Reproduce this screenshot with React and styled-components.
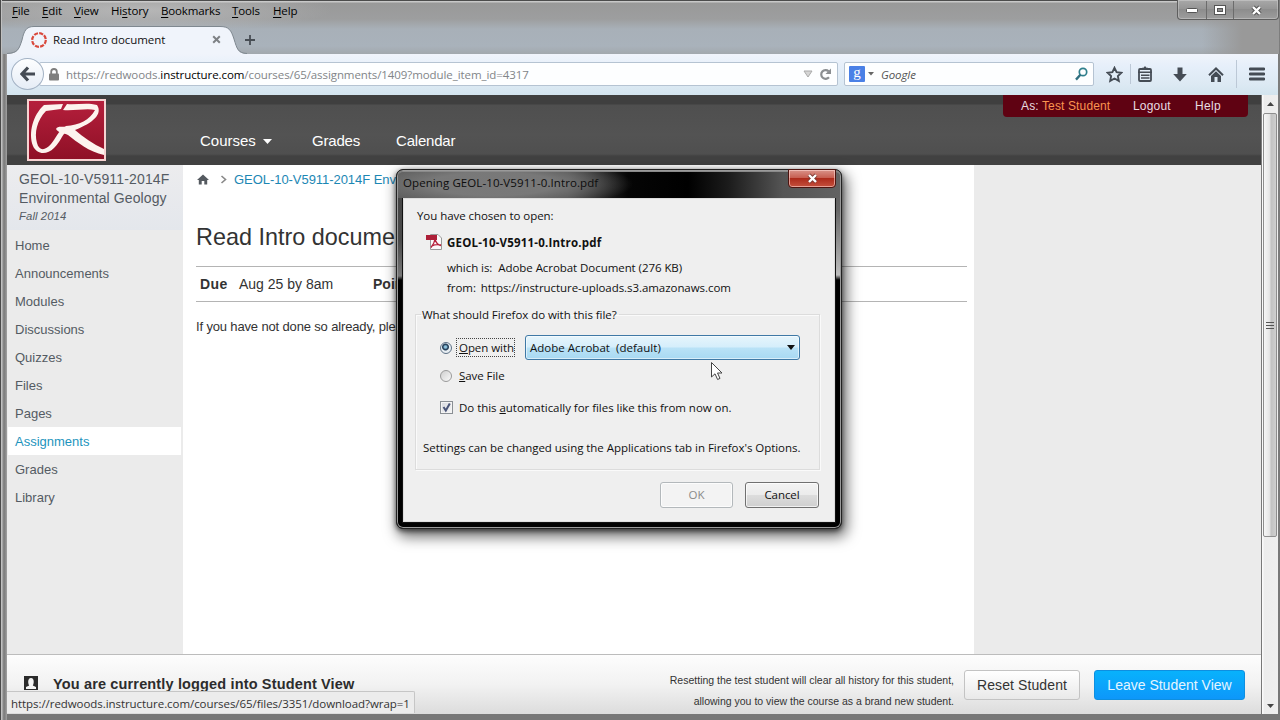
import React, { useState } from 'react'
import styled, { createGlobalStyle } from 'styled-components'

const ui = "'Open Sans', 'Noto Sans', sans-serif"
const arial = "'Liberation Sans', Arial, sans-serif"

const GlobalStyle = createGlobalStyle`
  * {
    box-sizing: border-box;
  }
  body {
    margin: 0;
    overflow: hidden;
    font-family: ${arial};
  }
`;

const Text = styled.span`
  font-size: ${p => p.$size}px;
  letter-spacing: ${p => p.$track || 0}px;
  white-space: pre;
`;

const UiText = styled.span`
  font-size: 11.5px;
  letter-spacing: ${p => p.$track || -0.06}px;
  white-space: pre;
`;

const Window = styled.div`
  position: relative;
  width: 1280px;
  height: 720px;
  display: flex;
  flex-flow: column;
  padding: 0 2px 6px 7px;
  background:
    linear-gradient(90deg, #4a4a4a 0 1px, #c0c0c0 1px 2px, #8a8a8a 3px, #7c7c7c 5px, #9b9b9b 6px 7px, transparent 7px),
    linear-gradient(#7d7d7d, #777);
`;

/* title area */

const TitleArea = styled.div`
  position: relative;
  height: 54px;
  margin: 0 -1px 0 -5px;
  padding-left: 5px;
  display: flex;
  flex-flow: column;
  border-top: 1px solid #4c4c4c;
  background:
    linear-gradient(90deg, rgba(150,150,150,0) 1200px, #999 1240px),
    radial-gradient(ellipse 190px 22px at 140px 9px, rgba(205,205,205,0.55), rgba(205,205,205,0)),
    linear-gradient(#c8c8c8 0 1px, #999 2px, #9d9e9f 18px, #a8b0b8 28px, #a9b2bb 45px, #a2a8ad 53px);
`;

const MenuBar = styled.div`
  display: flex;
  height: 20px;
  padding: 0 0 2px 5px;
  align-items: center;
  font-family: ${ui};
  color: #000;
`;

const MenuItem = styled.div`
  width: ${p => p.$w}px;
  line-height: 18px;
  u {
    text-underline-offset: 2px;
  }
`;

const Controls = styled.div`
  position: absolute;
  top: -1px;
  right: 0;
  display: flex;
  width: 102px;
  height: 20px;
  padding-top: 1px;
  border: 1px solid #5e5e5e;
  border-top: 0;
  border-radius: 0 0 4px 4px;
  background: linear-gradient(#a8a8a8, #949494 50%, #8d8d8d 50%, #9d9d9d);
  box-shadow: inset 0 0 0 1px rgba(255,255,255,0.25);
`;

const Control = styled.div`
  display: flex;
  align-items: center;
  justify-content: center;
  width: ${p => p.$w}px;
  & + & {
    border-left: 1px solid #6c6c6c;
  }
`;

const TabStrip = styled.div`
  display: flex;
  height: 33px;
  padding-top: 5px;
`;

const Tab = styled.div`
  position: relative;
  display: flex;
  align-items: center;
  width: 233px;
  height: 28px;
  padding: 0 0 1px 24px;
  font-family: ${ui};
  color: #111;
  & > * {
    position: relative;
  }
`;

const TabShape = styled.svg`
  && {
    position: absolute;
  }
  left: 0;
  top: 0;
`;

const TabLabel = styled.div`
  width: 165px;
  padding-left: 6px;
  margin-top: -2px;
  line-height: 18px;
`;

const NewTab = styled.svg`
  flex-shrink: 0;
  margin: 8px 0 0 4px;
`;

/* toolbar */

const Toolbar = styled.div`
  display: flex;
  align-items: center;
  height: 41px;
  flex-shrink: 0;
  padding-left: 4px;
  padding-bottom: 1px;
  background: linear-gradient(#f0f4fb, #e6effa 30%, #dce9f3 75%, #d3e4ee);
  font-family: ${ui};
`;

const Back = styled.div`
  z-index: 1;
  display: flex;
  align-items: center;
  justify-content: center;
  width: 33px;
  height: 32px;
  border: 1px solid #a3b2c4;
  border-radius: 50%;
  background: linear-gradient(#fdfeff, #e6edf6);
`;

const Field = styled.div`
  display: flex;
  align-items: center;
  width: ${p => p.$w}px;
  height: 24px;
  margin-left: ${p => p.$gap}px;
  padding-left: ${p => p.$pad}px;
  border: 1px solid #b5c3d2;
  border-radius: 2px;
  background: #fdfeff;
`;

const Address = styled.div`
  width: 744px;
  padding-left: 7px;
  line-height: 20px;
  color: #828588;
  b {
    font-weight: 400;
    color: #000;
  }
`;

const Grow = styled.div`
  flex: 1;
`;

const Engine = styled.div`
  width: 16px;
  height: 16px;
  border-radius: 1px;
  background: #4a80e6;
  color: #fff;
  font: 15px/13px 'Liberation Serif', serif;
  text-align: center;
`;

const Placeholder = styled.div`
  width: 190px;
  padding-left: 7px;
  line-height: 18px;
  margin-top: -1px;
  font-style: italic;
  color: #555;
`;

const Tools = styled.div`
  display: flex;
  align-items: center;
  padding-left: 12px;
`;

const Rule = styled.div`
  width: 1px;
  height: ${p => p.$h}px;
  margin: 0 ${p => p.$r}px 0 ${p => p.$l}px;
  background: #bcc8d6;
`;

/* page */

const Viewport = styled.div`
  position: relative;
  display: flex;
  height: 619px;
`;

const Page = styled.div`
  display: flex;
  flex-flow: column;
  width: 1254px;
`;

const Header = styled.div`
  display: flex;
  height: 70px;
  background: linear-gradient(#3f3f3f 0 9px, #4f4f4f 10px, #535353 40px, #4f4f4f 59px, #414141 61px);
`;

const Logo = styled.svg`
  margin: 4px 0 0 20px;
`;

const Nav = styled.div`
  display: flex;
  height: 18px;
  margin: 37px 0 0 94px;
  color: #fff;
  line-height: 18px;
`;

const NavItem = styled.div`
  width: ${p => p.$w}px;
  display: flex;
  align-items: center;
  gap: 7px;
`;

const Identity = styled.div`
  display: flex;
  width: 245px;
  height: 22px;
  margin: 0 13px 0 auto;
  padding-left: 18px;
  border-radius: 0 0 4px 4px;
  background: #5f0212;
  color: #e8dde0;
  line-height: 20px;
  em {
    font-style: normal;
    color: #fb9450;
  }
`;

const IdentityItem = styled.div`
  width: ${p => p.$w}px;
`;

const Body = styled.div`
  display: flex;
  height: 489px;
  background: #ebebeb;
`;

const Side = styled.div`
  width: 176px;
`;

const Course = styled.div`
  height: 65px;
  padding: 4px 0 0 12px;
  background: linear-gradient(#ececee, #e4e7ec);
  color: #555b63;
  line-height: 19px;
`;

const CourseLine = styled.div`
  height: ${p => p.$h}px;
`;

const SideItem = styled.div`
  height: 28px;
  line-height: 28px;
  margin: 0 2px 0 1px;
  padding-left: 7px;
  background: ${p => p.$active ? '#fff' : 'transparent'};
  color: ${p => p.$active ? '#1c94bd' : '#545b63'};
`;

const SideList = styled.div`
  padding-top: 1px;
`;

const Content = styled.div`
  width: 791px;
  background: #fff;
  color: #333;
`;

const Crumbs = styled.div`
  display: flex;
  align-items: center;
  height: 28px;
  padding-left: 14px;
  color: #1c87b4;
`;

const Title = styled.h1`
  height: 73px;
  margin: 0;
  padding: 27px 0 0 13px;
  line-height: 28px;
  font-weight: 400;
`;

const Details = styled.div`
  display: flex;
  align-items: center;
  width: 771px;
  height: 36px;
  margin-left: 13px;
  padding-left: 4px;
  border-top: 1px solid #b4b4b4;
  border-bottom: 1px solid #b4b4b4;
`;

const Detail = styled.div`
  width: ${p => p.$w}px;
  font-weight: ${p => p.$bold ? 700 : 400};
`;

const Paragraph = styled.div`
  padding: 15px 0 0 13px;
  line-height: 18px;
`;

const StudentBar = styled.div`
  display: flex;
  height: 60px;
  padding: 15px 16px 0 17px;
  border-top: 1px solid #bcbcbc;
  background: linear-gradient(#fdfdfd, #f2f2f2 50%, #dcdcdc);
  color: #333;
`;

const Logged = styled.div`
  padding: 4px 0 0 15px;
  line-height: 20px;
  font-weight: 700;
  color: #2c2c2c;
`;

const Note = styled.div`
  width: 290px;
  margin: -1px 10px 0 auto;
  text-align: right;
  line-height: 20px;
`;

const Button = styled.div`
  width: ${p => p.$w}px;
  height: 30px;
  margin-right: ${p => p.$gap || 0}px;
  border: 1px solid ${p => p.$primary ? '#0e8fe0' : '#c3c3c3'};
  border-radius: 3px;
  background: ${p => p.$primary ? 'linear-gradient(#08b2fc, #0d97fa)' : 'linear-gradient(#fff, #e9e9e9)'};
  color: ${p => p.$primary ? '#e4f5ff' : '#333'};
  line-height: 28px;
  text-align: center;
`;

const Status = styled.div`
  position: absolute;
  left: 0;
  bottom: 1px;
  width: 408px;
  height: 22px;
  padding-left: 4px;
  border: 1px solid #c6c6c6;
  border-left: 0;
  border-bottom: 0;
  border-radius: 0 2px 0 0;
  background: #ececec;
  color: #333;
  font-family: ${ui};
  line-height: 21px;
`;

const Scrollbar = styled.div`
  display: flex;
  flex-flow: column;
  align-items: center;
  width: 16px;
  margin-left: 1px;
  background: linear-gradient(90deg, #fafafa 0 1px, #ececec 2px, #efefef);
`;

const ScrollArrow = styled.div`
  height: 17px;
  padding-top: 7px;
`;

const Thumb = styled.div`
  display: flex;
  align-items: center;
  justify-content: center;
  width: 14px;
  height: 424px;
  margin: 1px 0 auto;
  border: 1px solid #8e8e8e;
  border-radius: 2px;
  background: linear-gradient(90deg, #f6f6f6, #e6e6e6 45%, #c2c2c2 60%, #cfcfcf);
`;

/* dialog */

const Dialog = styled.div`
  position: absolute;
  left: 396px;
  top: 169px;
  width: 446px;
  height: 360px;
  padding: 0 6px 7px 6px;
  border: 1px solid #222;
  border-radius: 7px;
  background:
    linear-gradient(#5c5c5c, #666 40px, #bdbdbd 105px, #000 110px) right / 12px 100% no-repeat,
    linear-gradient(#444, #4a4a4a 70px, #777 106px, #000 110px) left / 12px 100% no-repeat,
    #000;
  box-shadow: inset 0 0 0 1px #9a9a9a, 0 2px 5px rgba(0,0,0,0.6), 3px 6px 14px 2px rgba(0,0,0,0.55);
  font-family: ${ui};
  color: #111;
`;

const DialogTitle = styled.div`
  position: relative;
  height: 27px;
  margin: 1px -5px 0;
  padding: 0 0 0 5px;
  border-radius: 5px 5px 0 0;
  border-top: 1px solid #8a8a8a;
  line-height: 19px;
  color: #0d0d0d;
  background:
    radial-gradient(ellipse 140px 26px at 95px 12px, rgba(125,125,125,0.9) 45%, rgba(125,125,125,0)),
    linear-gradient(90deg, #555 0, #4a4a4a 170px, #050505 230px, #000 290px, #1b1b1b 330px, #555 385px, #626262);
`;

const Close = styled.div`
  position: absolute;
  top: -3px;
  right: 4px;
  display: flex;
  align-items: center;
  justify-content: center;
  width: 48px;
  height: 19px;
  border: 1px solid #4d1410;
  border-radius: 0 0 4px 4px;
  background: linear-gradient(#d9938a, #c75f52 45%, #ad2b1c 50%, #c5503d);
  box-shadow: inset 0 0 0 1px rgba(255,215,210,0.6);
`;

const Client = styled.div`
  height: 324px;
  padding: 7px 14px 0 11px;
  border: 1px solid #ddd;
  outline: 1px solid #111;
  background: #efefef;
`;

const Row = styled.div`
  display: flex;
  align-items: center;
  height: ${p => p.$h}px;
  padding-left: ${p => p.$left || 0}px;
  gap: ${p => p.$gap || 0}px;
  font-weight: ${p => p.$bold ? 700 : 400};
`;

const Group = styled.fieldset`
  height: 166px;
  margin: 4px 0 0 0;
  padding: 10px 0 0 24px;
  border: 1px solid #dcdcdc;
  box-shadow: inset 1px 1px 0 #fafafa, 1px 1px 0 #fafafa;
`;

const Legend = styled.legend`
  margin-left: -19px;
  padding: 0 2px 0 1px;
  line-height: 18px;
`;

const Focus = styled.span`
  height: 19px;
  padding: 0 0 0 2px;
  border: 1px dotted #444;
  line-height: 15px;
`;

const Hint = styled.div`
  margin-left: -17px;
  line-height: 44px;
`;

const Select = styled.div`
  display: flex;
  align-items: center;
  justify-content: space-between;
  width: 275px;
  height: 25px;
  margin-left: 10px;
  padding: 0 4px;
  border: 1px solid #3f79a6;
  border-radius: 3px;
  background: linear-gradient(#e6f5fc, #d5eefb 48%, #b9e2f7 52%, #a8d9f2);
  box-shadow: inset 0 0 0 1px rgba(255,255,255,0.55);
`;

const Radio = styled.div`
  width: 12px;
  height: 12px;
  margin-right: ${p => p.$gap}px;
  border: 1px solid ${p => p.$on ? '#5d7186' : '#9a9a9a'};
  border-radius: 50%;
  background: ${p => p.$on
    ? 'radial-gradient(circle at 45% 40%, #8fc4e0 0 1px, #27425c 2.5px 3px, #e8eef3 4px)'
    : 'linear-gradient(135deg, #cfcfcf, #fafafa)'};
`;

const Check = styled.div`
  display: flex;
  width: 13px;
  height: 13px;
  margin-right: 6px;
  border: 1px solid #8a8f94;
  background: linear-gradient(135deg, #d6d9de, #f7f7f7);
  box-shadow: inset 0 0 0 1px #f4f4f4;
`;

const Buttons = styled.div`
  display: flex;
  justify-content: flex-end;
  gap: 12px;
  padding: 12px 1px 0 0;
`;

const DialogButton = styled.div`
  width: ${p => p.$w}px;
  height: 26px;
  border: 1px solid ${p => p.$off ? '#b3b8bb' : '#707070'};
  border-radius: 3px;
  background: ${p => p.$off ? '#f3f3f3' : 'linear-gradient(#f3f3f3, #ebebeb 48%, #dcdcdc 52%, #cfcfcf)'};
  box-shadow: inset 0 0 0 1px rgba(255,255,255,0.7);
  color: ${p => p.$off ? '#8a8a8a' : '#111'};
  line-height: 21px;
  text-align: center;
`;

const Cursor = styled.svg`
  position: absolute;
  left: 710px;
  top: 361px;
`;

const menus = [
  ['F', 'ile', 30, ''],
  ['E', 'dit', 32, ''],
  ['V', 'iew', 37, ''],
  ['s', 'tory', 50, 'Hi'],
  ['B', 'ookmarks', 71, ''],
  ['T', 'ools', 41, ''],
  ['H', 'elp', 40, ''],
]

const links = ['Home', 'Announcements', 'Modules', 'Discussions', 'Quizzes', 'Files', 'Pages', 'Assignments', 'Grades', 'Library']

const Triangle = ({ w, h, up, color }) => (
  <svg width={w} height={h} display="block">
    <path d={up ? `M0 ${h}H${w}L${w / 2} 0Z` : `M0 0H${w}L${w / 2} ${h}Z`} fill={color} />
  </svg>
)

const Reload = styled.svg`
  margin-left: 6px;
`;

const EngineArrow = styled.svg`
  margin-left: 3px;
`;

const SearchIcon = styled.svg`
  margin-right: 5px;
`;

const ToolIcon = styled.svg`
  margin-left: 21px;
`;

const CrumbArrow = styled.svg`
  margin: 0 7px 0 11px;
`;

const StudentIcon = styled.svg`
  margin-top: 6px;
`;

const TitleBar = () => (
  <TitleArea>
    <MenuBar>
      {menus.map(([key, rest, w, pre]) => (
        <MenuItem key={rest} $w={w}><UiText $track={-0.15}>{pre}<u>{key}</u>{rest}</UiText></MenuItem>
      ))}
    </MenuBar>
    <Controls>
      <Control $w={28}>
        <svg width="12" height="5"><rect x="0.5" y="0.5" width="11" height="4" rx="1" fill="#fff" stroke="#555" /></svg>
      </Control>
      <Control $w={28}>
        <svg width="12" height="10"><rect x="2" y="2" width="8" height="6" fill="none" stroke="#555" strokeWidth="4" /><rect x="2" y="2" width="8" height="6" fill="none" stroke="#fff" strokeWidth="2" /></svg>
      </Control>
      <Control $w={45}>
        <svg width="13" height="11"><path d="M3 2L10 9M10 2L3 9" stroke="#555" strokeWidth="4.4" /><path d="M3 2L10 9M10 2L3 9" stroke="#fff" strokeWidth="2.4" /></svg>
      </Control>
    </Controls>
    <TabStrip>
      <Tab>
        <TabShape width="240" height="28">
          <path d="M0 28C11 28 12 23 15 14C17 5 19 0.5 27 0.5H213C222 0.5 224 4 227 13C230 23 231 28 240 28Z" fill="#f0f4fb" />
          <path d="M0 27.5C11 27 12 23 15 14C17 5 19 0.5 27 0.5H213C222 0.5 224 4 227 13C230 23 231 27 240 27.5" fill="none" stroke="#7f8890" />
        </TabShape>
        <svg width="16" height="16"><circle cx="8" cy="8" r="6.8" fill="none" stroke="#d9483b" strokeWidth="2.2" strokeDasharray="4.1 1.24" /></svg>
        <TabLabel><UiText $track={-0.08}>Read Intro document</UiText></TabLabel>
        <svg width="9" height="9"><path d="M1.2 1.2L7.8 7.8M7.8 1.2L1.2 7.8" stroke="#7e8185" strokeWidth="2" /></svg>
      </Tab>
      <NewTab width="12" height="12"><path d="M6 1V11M1 6H11" stroke="#474d54" strokeWidth="1.8" /></NewTab>
    </TabStrip>
  </TitleArea>
)

const NavBar = () => (
  <Toolbar>
    <Back>
      <svg width="16" height="16"><path d="M8 1.5L2 8L8 14.5M2.5 8H15" fill="none" stroke="#454c55" strokeWidth="3.2" /></svg>
    </Back>
    <Field $w={799} $gap={-5} $pad={9}>
      <svg width="10" height="13"><path d="M2.2 6V3.8A2.8 2.8 0 0 1 7.8 3.8V6" fill="none" stroke="#7e7e7e" strokeWidth="1.8" /><rect y="5.5" width="10" height="7" rx="1" fill="#7e7e7e" /></svg>
      <Address>
        <UiText $track={-0.08}>https://redwoods.<b>instructure.com</b>/courses/65/assignments/1409?module_item_id=4317</UiText>
      </Address>
      <svg width="10" height="8"><path d="M1 1H9L5 7Z" fill="#d5d5d5" stroke="#aaa" /></svg>
      <Reload width="13" height="13"><path d="M10 9.3A4.4 4.4 0 1 1 9.6 3.2" fill="none" stroke="#8b8e91" strokeWidth="2.2" /><path d="M12 0.5V6H6.5Z" fill="#8b8e91" /></Reload>
    </Field>
    <Field $w={250} $gap={6} $pad={4}>
      <Engine>g</Engine>
      <EngineArrow width="6" height="4"><path d="M0 0H6L3 3.5Z" fill="#666" /></EngineArrow>
      <Placeholder><UiText $track={-0.1}>Google</UiText></Placeholder>
      <Grow />
      <SearchIcon width="13" height="14"><circle cx="8" cy="5" r="3.7" fill="none" stroke="#2f7f8c" strokeWidth="1.7" /><path d="M5.4 7.8L1 12.6" stroke="#2f6f80" strokeWidth="2.4" /></SearchIcon>
    </Field>
    <Tools>
      <svg width="17" height="17" viewBox="0 0 17 17"><path d="M8.5 1.8L10.6 6.2L15.4 6.8L11.9 10.1L12.8 14.9L8.5 12.5L4.2 14.9L5.1 10.1L1.6 6.8L6.4 6.2Z" fill="none" stroke="#454c55" strokeWidth="1.9" /></svg>
      <Rule $h={20} $l={7} $r={7} />
      <svg width="14" height="16"><rect x="1" y="3" width="12" height="12" rx="1" fill="none" stroke="#454c55" strokeWidth="1.8" /><path d="M4 3.5V1.8H5.5L7 0L8.5 1.8H10V3.5Z" fill="#454c55" /><path d="M0 6.3H14M3 9.3H11.5M3 12H11.5" stroke="#454c55" strokeWidth="1.4" /></svg>
      <ToolIcon width="14" height="15"><path d="M4.5 0.5H9.5V7H13.8L7 14.5L0.2 7H4.5Z" fill="#454c55" /></ToolIcon>
      <ToolIcon width="16" height="15"><path d="M1 8.3L8 1.5L15 8.3" fill="none" stroke="#454c55" strokeWidth="2" /><path d="M3 9L8 4.2L13 9V15H9.5V10H6.5V15H3Z" fill="#454c55" /></ToolIcon>
      <Rule $h={28} $l={12} $r={12} />
      <svg width="16" height="14"><path d="M1 2H15M1 7H15M1 12H15" stroke="#454c55" strokeWidth="2.8" strokeLinecap="round" /></svg>
    </Tools>
  </Toolbar>
)

const CollegeLogo = () => (
  <Logo width="79" height="62" viewBox="0 0 79 62">
    <defs>
      <linearGradient id="crimson" x1="0" y1="0" x2="0" y2="1">
        <stop offset="0" stopColor="#b51f3c" />
        <stop offset="1" stopColor="#8f1026" />
      </linearGradient>
    </defs>
    <rect width="79" height="62" fill="#f6d3d2" />
    <rect x="2" y="2" width="75" height="58" fill="url(#crimson)" />
    <path d="M17 6L36 5L34 10L19 12C10 21 7 34 10 44C12 52 18 52 24 45C29 39 30 34 35 31L39 33C35 36 34 42 27 49C20 56 10 56 6 47C1 34 6 16 17 6Z" fill="#fdf3ee" />
    <path d="M40 5C50 6 60 3 70 6C76 15 66 24 48 31C56 38 66 45 77 50V56C62 53 50 43 41 36C37 34 31 34 29 30C31 26 36 29 39 27C52 26 63 21 68 11C60 9 47 12 36 11Z" fill="#fdf3ee" />
  </Logo>
)

const PageHeader = () => (
  <Header>
    <CollegeLogo />
    <Nav>
      <NavItem $w={112}><Text $size={15}>Courses</Text><Triangle w={9} h={5} color="#fff" /></NavItem>
      <NavItem $w={84}><Text $size={15} $track={-0.2}>Grades</Text></NavItem>
      <NavItem $w={80}><Text $size={15} $track={-0.2}>Calendar</Text></NavItem>
    </Nav>
    <Identity>
      <IdentityItem $w={112}><Text $size={12} $track={0.13}>As: <em>Test Student</em></Text></IdentityItem>
      <IdentityItem $w={62}><Text $size={12} $track={0.2}>Logout</Text></IdentityItem>
      <IdentityItem $w={40}><Text $size={12} $track={0.3}>Help</Text></IdentityItem>
    </Identity>
  </Header>
)

const Sidebar = () => (
  <Side>
    <Course>
      <CourseLine $h={19}><Text $size={14} $track={0.15}>GEOL-10-V5911-2014F</Text></CourseLine>
      <CourseLine $h={17}><Text $size={14} $track={0.1}>Environmental Geology</Text></CourseLine>
      <CourseLine $h={19}><Text $size={11.3} $track={0.1} as="i">Fall 2014</Text></CourseLine>
    </Course>
    <SideList>
      {links.map(name => (
        <SideItem key={name} $active={name === 'Assignments'}><Text $size={13}>{name}</Text></SideItem>
      ))}
    </SideList>
  </Side>
)

const Assignment = () => (
  <Content>
    <Crumbs>
      <svg width="12" height="11"><path d="M6 0.5L12 6H10.2V10.5H7.3V7H4.7V10.5H1.8V6H0Z" fill="#555a60" /></svg>
      <CrumbArrow width="7" height="9"><path d="M1.5 1L5.5 4.5L1.5 8" fill="none" stroke="#888" strokeWidth="1.6" /></CrumbArrow>
      <Text $size={13} $track={-0.05}>GEOL-10-V5911-2014F Env</Text>
    </Crumbs>
    <Title><Text $size={23.4}>Read Intro document</Text></Title>
    <Details>
      <Detail $w={39} $bold><Text $size={14} $track={0.4}>Due</Text></Detail>
      <Detail $w={134}><Text $size={14}>Aug 25 by 8am</Text></Detail>
      <Detail $w={60} $bold><Text $size={14}>Points</Text></Detail>
    </Details>
    <Paragraph><Text $size={13} $track={-0.15}>If you have not done so already, please read</Text></Paragraph>
  </Content>
)

const StudentView = () => (
  <StudentBar>
    <StudentIcon width="14" height="16"><rect y="0" width="14" height="14" fill="#2b2b2b" /><path d="M2 13V11L5.2 9.6C3.6 7 3.8 2 7 2S10.4 7 8.8 9.6L12 11V13Z" fill="#f4f4f4" /></StudentIcon>
    <Logged><Text $size={14.5} $track={0.15}>You are currently logged into Student View</Text></Logged>
    <Note>
      <Text $size={10.5}>Resetting the test student will clear all history for this student,{'\n'}allowing you to view the course as a brand new student.</Text>
    </Note>
    <Button $w={116} $gap={14}><Text $size={14} $track={0.1}>Reset Student</Text></Button>
    <Button $w={151} $primary><Text $size={14}>Leave Student View</Text></Button>
  </StudentBar>
)

const OpenDialog = () => {

  const [choice, setChoice] = useState('open')
  const [remember, setRemember] = useState(true)

  return (
    <Dialog>
      <DialogTitle>
        <UiText $track={0.09}>Opening GEOL-10-V5911-0.Intro.pdf</UiText>
        <Close>
          <svg width="13" height="11"><path d="M3 2L10 9M10 2L3 9" stroke="#7a3a34" strokeWidth="4" /><path d="M3 2L10 9M10 2L3 9" stroke="#fff" strokeWidth="2.4" /></svg>
        </Close>
      </DialogTitle>
      <Client>
        <Row $h={18} $left={2}><UiText>You have chosen to open:</UiText></Row>
        <Row $h={36} $left={11} $gap={5} $bold>
          <svg width="16" height="16"><path d="M4.5 0.5H12L15.5 4V15.5H4.5Z" fill="#fafafa" stroke="#999" /><path d="M0 1H11V6H0Z" fill="#ad1f38" /><path d="M9 5C8.5 9 7 11 5 13.5M9 5C10 9 12 11 15 11.5M6 12C9 10.3 12 10.5 15 11" fill="none" stroke="#b5213b" strokeWidth="1.3" /></svg>
          <UiText $track={0.2}>GEOL-10-V5911-0.Intro.pdf</UiText>
        </Row>
        <Row $h={15} $left={32} $gap={6}><UiText>which is:</UiText><UiText>Adobe Acrobat Document (276 KB)</UiText></Row>
        <Row $h={25} $left={32} $gap={5}><UiText>from:</UiText><UiText>https://instructure-uploads.s3.amazonaws.com</UiText></Row>
        <Group>
          <Legend><UiText>What should Firefox do with this file?</UiText></Legend>
          <Row $h={27} onClick={() => setChoice('open')}>
            <Radio $gap={4} $on={choice === 'open'} />
            <Focus><UiText><u>O</u>pen with</UiText></Focus>
            <Select><UiText $track={0.03}>Adobe Acrobat  (default)</UiText><Triangle w={8} h={5} color="#111" /></Select>
          </Row>
          <Row $h={29} onClick={() => setChoice('save')}>
            <Radio $gap={7} $on={choice === 'save'} />
            <UiText><u>S</u>ave File</UiText>
          </Row>
          <Row $h={34} onClick={() => setRemember(!remember)}>
            <Check>
              {remember && <svg width="11" height="11"><path d="M2.5 5L4.8 8.5L8.8 1.5" fill="none" stroke="#4a5578" strokeWidth="2" /></svg>}
            </Check>
            <UiText $track={-0.04}>Do this <u>a</u>utomatically for files like this from now on.</UiText>
          </Row>
          <Hint><UiText $track={-0.04}>Settings can be changed using the Applications tab in Firefox's Options.</UiText></Hint>
        </Group>
        <Buttons>
          <DialogButton $w={73} $off><UiText>OK</UiText></DialogButton>
          <DialogButton $w={74}><UiText>Cancel</UiText></DialogButton>
        </Buttons>
      </Client>
    </Dialog>
  )
}

const App = () => (
  <Window>
    <GlobalStyle />
    <TitleBar />
    <NavBar />
    <Viewport>
      <Page>
        <PageHeader />
        <Body>
          <Sidebar />
          <Assignment />
        </Body>
        <StudentView />
      </Page>
      <Scrollbar>
        <ScrollArrow><Triangle w={7} h={4} up color="#444" /></ScrollArrow>
        <Thumb>
          <svg width="8" height="8"><path d="M0 1.5H8M0 4.5H8M0 7.5H8" stroke="#555" /></svg>
        </Thumb>
        <ScrollArrow><Triangle w={7} h={4} color="#444" /></ScrollArrow>
      </Scrollbar>
      <Status><UiText>https://redwoods.instructure.com/courses/65/files/3351/download?wrap=1</UiText></Status>
    </Viewport>
    <OpenDialog />
    <Cursor width="13" height="20"><path d="M1.5 1.5V16L5 12.8L7.6 18.5L10 17.4L7.5 12H12Z" fill="#fff" stroke="#444" /></Cursor>
  </Window>
)


export default App
